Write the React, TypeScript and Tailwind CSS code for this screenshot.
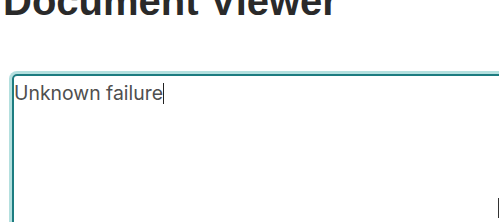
import React from 'react';

const App = () => {
  return (
    <div className="relative h-[222px] w-[499px] overflow-hidden bg-white font-['Liberation_Sans',sans-serif]">
      <h1 className="ml-[3px] mt-[-23px] text-[40px] leading-[48px] font-bold text-[#2a2a2a] whitespace-nowrap">
        Document Viewer
      </h1>
      <div className="mt-[49px] ml-[12px] w-[520px] h-[200px] rounded-[5px] border-2 border-[#1d7c80] ring-[3px] ring-[#b4e0df]">
        <div className="font-['Inter',sans-serif] text-[19.4px] leading-[24px] text-[#4f4f4f] pt-[5px] flex items-center">
          <span>Unknown failure</span>
          <span className="inline-block w-px h-[21px] bg-[#222]" />
        </div>
      </div>
      <div className="absolute right-0 top-[198px] w-px h-[20px] bg-[#333]" />
    </div>
  );
};

export default App;
